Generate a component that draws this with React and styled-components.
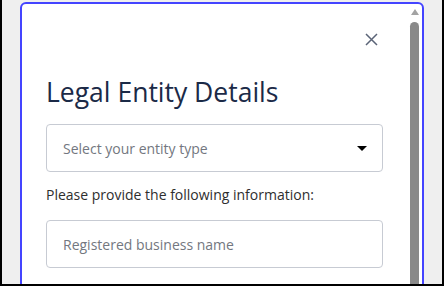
import React from 'react'
import styled, { createGlobalStyle } from 'styled-components'

const GlobalStyle = createGlobalStyle`
  html, body {
    margin: 0;
    padding: 0;
    overflow: hidden;
  }
  body {
    font-family: "Open Sans", "Noto Sans", sans-serif;
  }
`

const Frame = styled.div`
  box-sizing: border-box;
  width: 444px;
  height: 286px;
  overflow: hidden;
  background: #efefef;
  border: 2px solid #000;
  border-top: none;
`

const Modal = styled.div`
  box-sizing: border-box;
  display: flex;
  width: 404px;
  height: 320px;
  margin: 2px 0 0 18px;
  background: #fff;
  border: 2px solid #4444ff;
  border-radius: 6px;
`

const Body = styled.div`
  flex: 1;
  padding: 23px 27px 0 24px;
`

const Header = styled.div`
  display: flex;
  justify-content: flex-end;
`

const Close = styled.button`
  display: flex;
  align-items: center;
  justify-content: center;
  width: 24px;
  height: 24px;
  padding: 0;
  border: none;
  background: none;
  color: #5b6477;
`

const Title = styled.h2`
  margin: 25px 0 16px;
  font-size: 26.5px;
  line-height: 32px;
  font-weight: 400;
  color: #1b2a47;
`

const Field = styled.div`
  box-sizing: border-box;
  display: flex;
  align-items: center;
  justify-content: space-between;
  height: 48px;
  padding: 0 15px 0 16px;
  border: 1px solid #c7cbd3;
  border-radius: 4px;
  font-size: 14px;
  color: #737780;
`

const Caret = styled.span`
  width: 0;
  height: 0;
  border-left: 5.5px solid transparent;
  border-right: 5.5px solid transparent;
  border-top: 5px solid #000;
`

const Label = styled.p`
  margin: 13px 0 15px;
  font-size: 14px;
  line-height: 20px;
  color: #2e2e2e;
`

const Track = styled.div`
  display: flex;
  flex-direction: column;
  align-items: flex-start;
  width: 12px;
  padding-top: 5px;
`

const Arrow = styled.span`
  width: 0;
  height: 0;
  margin-left: 1px;
  border-left: 4px solid transparent;
  border-right: 4px solid transparent;
  border-bottom: 6px solid #a3a3a3;
`

const Thumb = styled.div`
  flex: 1;
  width: 9px;
  margin-top: 7px;
  background: #898989;
  border-radius: 4.5px 4.5px 0 0;
`

export default function App() {
  return (
    <>
      <GlobalStyle />
      <Frame>
        <Modal>
          <Body>
            <Header>
              <Close aria-label="Close">
                <svg width="13" height="13" viewBox="0 0 13 13" fill="none" stroke="currentColor" strokeWidth="1.5">
                  <path d="M1 1L12 12M12 1L1 12" />
                </svg>
              </Close>
            </Header>
            <Title>Legal Entity Details</Title>
            <Field>
              Select your entity type
              <Caret />
            </Field>
            <Label>Please provide the following information:</Label>
            <Field>Registered business name</Field>
          </Body>
          <Track>
            <Arrow />
            <Thumb />
          </Track>
        </Modal>
      </Frame>
    </>
  )
}
